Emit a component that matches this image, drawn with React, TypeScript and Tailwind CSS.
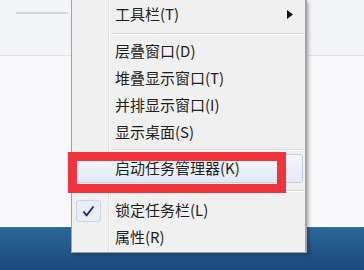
import React from "react";

const font = { fontFamily: '"Noto Sans CJK SC", "Microsoft YaHei", sans-serif' };

function Row({ label, check = false, arrow = false, h = "h-[27px]" }: { label: string; check?: boolean; arrow?: boolean; h?: string }) {
    return (
        <div className={`flex ${h}`}>
            <div className="w-[37px] shrink-0 border-r border-[#e0e0e0] flex items-start">
                {check && (
                    <div className="ml-[4px] mt-[3px] w-[25px] h-[22px] rounded-[3px] border border-[#c9d5e3] bg-[#e9eef5] flex items-center justify-center">
                        <svg width="13" height="12" viewBox="0 0 13 12">
                            <path d="M1.5 6.5 L4.5 10.5 L11.5 1.5" fill="none" stroke="#1c2a8a" strokeWidth="2" strokeLinejoin="round" />
                        </svg>
                    </div>
                )}
            </div>
            <div className="flex-1 border-l border-white flex items-center justify-between pl-[5px] text-[15px] text-[#1e1e1e]">
                <span>{label}</span>
                {arrow && (
                    <svg width="6" height="9" viewBox="0 0 6 9" className="mr-[12px]">
                        <path d="M0 0 L6 4.5 L0 9 Z" fill="#111" />
                    </svg>
                )}
            </div>
        </div>
    );
}

function Sep({ h, top }: { h: string; top: string }) {
    return (
        <div className={`flex ${h}`}>
            <div className="w-[37px] shrink-0 border-r border-[#e0e0e0]" />
            <div className="flex-1 border-l border-white">
                <div className={`${top} ml-[1px] border-t border-[#d9d9d9] border-b border-b-white`} />
            </div>
        </div>
    );
}

export default function App() {
    return (
        <div className="relative w-[364px] h-[270px] overflow-hidden" style={font}>
            {/* desktop / window behind */}
            <div className="flex flex-col h-full">
                <div className="h-[56px] bg-[#f3f4f7] border-b border-[#e1e3e7] relative">
                    <div className="absolute left-[16px] top-[12px] w-[52px] border-t-2 border-[#d3d7dc]" />
                </div>
                <div className="h-[171px] bg-[#f8f8fa]" />
                <div className="flex-1 bg-gradient-to-b from-[#2c6699] to-[#19497a] border-t border-[#3b6f9c]" />
            </div>

            {/* context menu */}
            <div className="absolute left-[71px] top-0 w-[236px] bg-[#f0f0f0] border-l border-r-2 border-b border-[#a3a3a3] shadow-[2px_2px_3px_rgba(0,0,0,0.25)] pb-[1px]">
                <Row label="工具栏(T)" arrow h="h-[28px]" />
                <Sep h="h-[10px]" top="mt-[5px]" />
                <Row label="层叠窗口(D)" />
                <Row label="堆叠显示窗口(T)" />
                <Row label="并排显示窗口(I)" />
                <Row label="显示桌面(S)" />
                <Sep h="h-[8px]" top="mt-[3px]" />
                <div className="h-[30px] px-[2px]">
                    <div className="h-[29px] rounded-[3px] border border-[#b9d1ec] bg-gradient-to-b from-[#f4f7fc] to-[#e2eaf6] flex items-center pl-[40px] text-[15px] text-[#1e1e1e]">
                        启动任务管理器(K)
                    </div>
                </div>
                <Sep h="h-[13px]" top="mt-[6px]" />
                <Row label="锁定任务栏(L)" check />
                <Row label="属性(R)" />
            </div>

            {/* red annotation */}
            <div className="absolute left-[68px] top-[152px] w-[218px] h-[41px] border-[9px] border-[#f0343a]" />
        </div>
    );
}
